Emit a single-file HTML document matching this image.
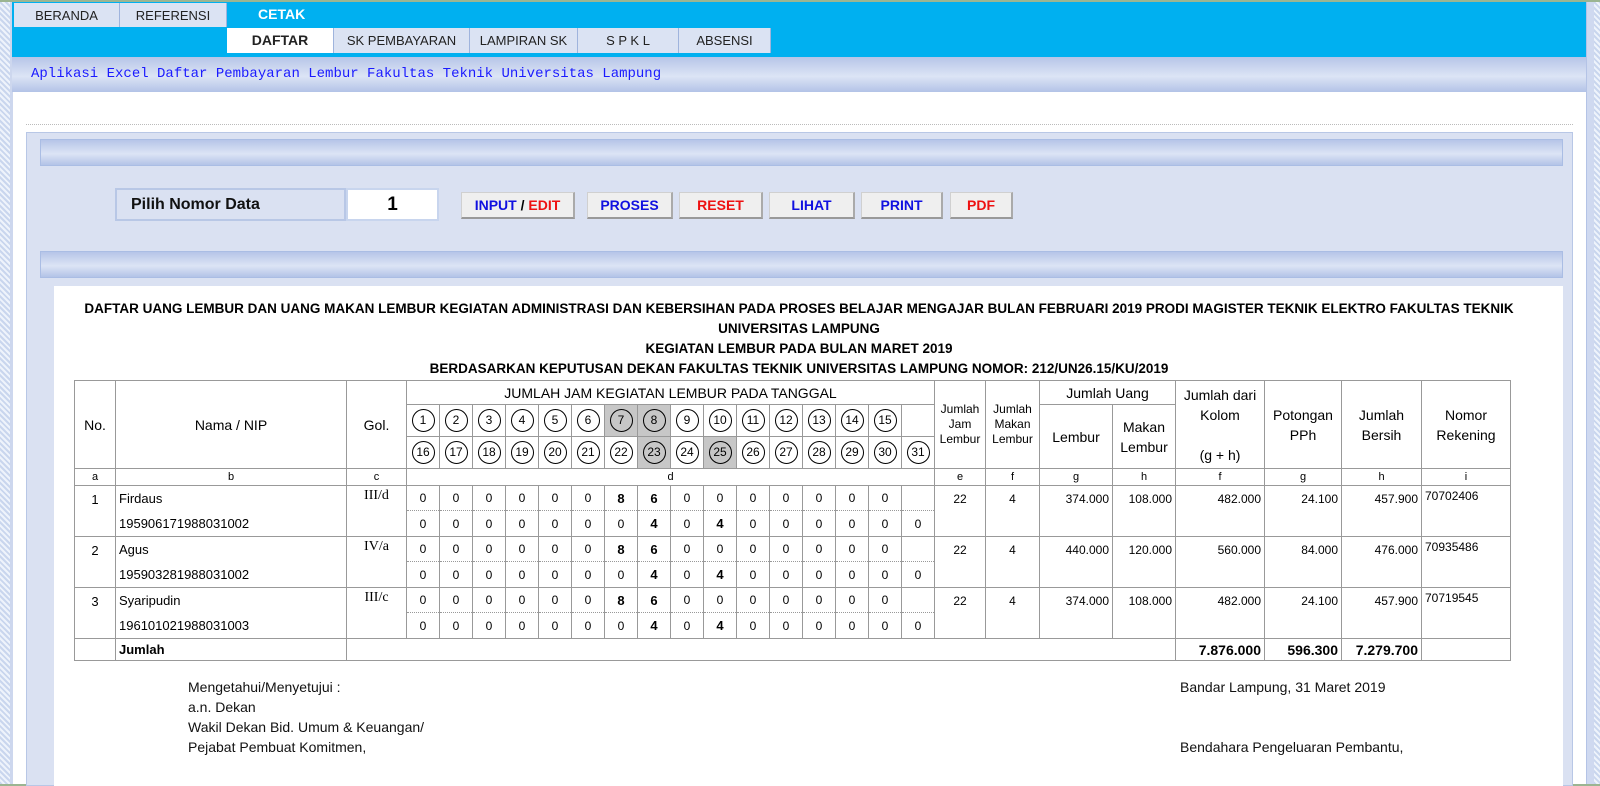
<!DOCTYPE html>
<html><head><meta charset="utf-8"><style>
*{box-sizing:border-box;margin:0;padding:0}
body{width:1600px;height:786px;overflow:hidden;background:#fff;position:relative;font-family:"Liberation Sans",sans-serif;}
.abs{position:absolute}
.hatch{background:repeating-linear-gradient(45deg,#c9d6ee 0 2px,#eef3fb 2px 4px)}
.tab{position:absolute;font-size:13px;color:#222;text-align:center;background:#dbe3f3;border-right:1px solid #9fb4dd;line-height:25px;font-family:"Liberation Sans Narrow","Liberation Sans",sans-serif}
.grad{background:linear-gradient(#b6c5e8,#dce4f5 55%,#b3c3e7);}
.btn{position:absolute;top:192px;height:27px;background:#efefef;border:1px solid #d0d0d0;border-bottom:2px solid #999;border-right:2px solid #aaa;font-size:14px;font-weight:bold;text-align:center;line-height:24px;font-family:"Liberation Sans Narrow","Liberation Sans",sans-serif}
.b{color:#1010e0}.r{color:#ee1111}
table{position:absolute;left:74px;top:380px;border-collapse:collapse;table-layout:fixed;font-family:"Liberation Sans Narrow","Liberation Sans",sans-serif;font-size:12px;color:#000}
td{border:1px solid #999;text-align:center;padding:0;overflow:hidden;white-space:nowrap}
.c{display:inline-block;width:23px;height:23px;border:1px solid #000;border-radius:50%;line-height:21px;font-size:12px}
.sh{background:repeating-conic-gradient(#aaa 0 25%,#e4e4e4 0 50%) 0 0/2px 2px}
.t{border-top:none}.bt{border-bottom:1px dotted #999}
.tp{vertical-align:top;padding-top:6px}
.rt{text-align:right;padding-right:3px}
.lf{text-align:left;padding-left:3px}
.bold{font-weight:bold;font-size:13px}
.sig{position:absolute;font-size:14px;color:#111;line-height:20px}
</style></head><body>
<div class="abs" style="left:0;top:0;width:1600px;height:2px;background:#9bb592"></div>
<div class="abs" style="left:0;top:784px;width:1600px;height:2px;background:#9bb592"></div>
<div class="abs hatch" style="left:0;top:2px;width:10px;height:782px"></div>
<div class="abs" style="left:10px;top:2px;width:3px;height:782px;background:#cdd7ee"></div>
<div class="abs" style="left:1586px;top:2px;width:8px;height:782px;background:#cfd9f0;border-left:1px solid #b4c3e6"></div>
<div class="abs hatch" style="left:1594px;top:2px;width:6px;height:782px"></div>
<div class="abs" style="left:12px;top:2px;width:1574px;height:55px;background:#00b0f0"></div>
<div class="tab" style="left:14px;top:3px;width:106px;height:24px">BERANDA</div>
<div class="tab" style="left:120px;top:3px;width:107px;height:24px">REFERENSI</div>
<div class="abs" style="left:258px;top:6px;color:#fff;font-weight:bold;font-size:14px;font-family:'Liberation Sans Narrow','Liberation Sans',sans-serif">CETAK</div>
<div class="tab" style="left:227px;top:28px;width:107px;height:25px;background:#fff;font-weight:bold;font-size:14px">DAFTAR</div>
<div class="tab" style="left:334px;top:28px;width:136px;height:25px">SK PEMBAYARAN</div>
<div class="tab" style="left:470px;top:28px;width:108px;height:25px">LAMPIRAN SK</div>
<div class="tab" style="left:578px;top:28px;width:101px;height:25px">S P K L</div>
<div class="tab" style="left:679px;top:28px;width:92px;height:25px">ABSENSI</div>
<div class="abs grad" style="left:12px;top:57px;width:1574px;height:35px"></div>
<div class="abs" style="left:31px;top:66px;font-family:'Liberation Mono',monospace;font-size:14px;color:#1a1aff">Aplikasi Excel Daftar Pembayaran Lembur Fakultas Teknik Universitas Lampung</div>
<div class="abs" style="left:26px;top:124px;width:1547px;border-top:1px dotted #bbb"></div>
<div class="abs" style="left:26px;top:132px;width:1547px;height:654px;background:#dae1f2;border:1px solid #b8c7e6"></div>
<div class="abs grad" style="left:40px;top:139px;width:1523px;height:27px;border:1px solid #aabde4"></div>
<div class="abs grad" style="left:40px;top:251px;width:1523px;height:27px;border:1px solid #aabde4"></div>
<div class="abs" style="left:115px;top:188px;width:231px;height:33px;border:2px solid #b8c7e6;background:#dae1f2;font-weight:bold;font-size:16px;line-height:29px;padding-left:14px;color:#111;font-family:'Liberation Sans Narrow','Liberation Sans',sans-serif">Pilih Nomor Data</div>
<div class="abs" style="left:346px;top:188px;width:93px;height:33px;background:#fff;border:2px solid #c8d5ee;text-align:center;font-weight:bold;font-size:19px;line-height:29px">1</div>
<div class="btn" style="left:461px;width:114px"><span class="b">INPUT</span> / <span class="r">EDIT</span></div>
<div class="btn b" style="left:587px;width:86px">PROSES</div>
<div class="btn r" style="left:679px;width:84px">RESET</div>
<div class="btn b" style="left:769px;width:86px">LIHAT</div>
<div class="btn b" style="left:861px;width:82px">PRINT</div>
<div class="btn r" style="left:950px;width:63px">PDF</div>
<div class="abs" style="left:54px;top:286px;width:1509px;height:500px;background:#fff"></div>
<div class="abs" style="left:54px;top:299px;width:1490px;text-align:center;font-weight:bold;font-size:13.5px;line-height:20px;color:#000;font-family:'Liberation Sans Narrow','Liberation Sans',sans-serif">DAFTAR UANG LEMBUR DAN UANG MAKAN LEMBUR KEGIATAN ADMINISTRASI DAN KEBERSIHAN PADA PROSES BELAJAR MENGAJAR BULAN FEBRUARI 2019 PRODI MAGISTER TEKNIK ELEKTRO FAKULTAS TEKNIK<br>UNIVERSITAS LAMPUNG<br>KEGIATAN LEMBUR PADA BULAN MARET 2019<br>BERDASARKAN KEPUTUSAN DEKAN FAKULTAS TEKNIK UNIVERSITAS LAMPUNG NOMOR: 212/UN26.15/KU/2019</div>
<table>
<colgroup><col style="width:41px"><col style="width:231px"><col style="width:60px">
<col style="width:33px"><col style="width:33px"><col style="width:33px"><col style="width:33px"><col style="width:33px"><col style="width:33px"><col style="width:33px"><col style="width:33px"><col style="width:33px"><col style="width:33px"><col style="width:33px"><col style="width:33px"><col style="width:33px"><col style="width:33px"><col style="width:33px"><col style="width:33px">
<col style="width:51px"><col style="width:54px"><col style="width:73px"><col style="width:63px"><col style="width:89px"><col style="width:77px"><col style="width:80px"><col style="width:89px"></colgroup>
<tr style="height:24px"><td rowspan="3" style="font-size:14px">No.</td><td rowspan="3" style="font-size:14px">Nama / NIP</td><td rowspan="3" style="font-size:14px">Gol.</td><td colspan="16" style="font-size:14px">JUMLAH JAM KEGIATAN LEMBUR PADA TANGGAL</td><td rowspan="3" style="white-space:normal;line-height:15px">Jumlah Jam Lembur</td><td rowspan="3" style="white-space:normal;line-height:15px">Jumlah Makan Lembur</td><td colspan="2" style="font-size:14px">Jumlah Uang</td><td rowspan="3" style="font-size:14px;line-height:20px">Jumlah dari<br>Kolom<br><br>(g + h)</td><td rowspan="3" style="font-size:14px;line-height:20px">Potongan<br>PPh</td><td rowspan="3" style="font-size:14px;line-height:20px">Jumlah<br>Bersih</td><td rowspan="3" style="font-size:14px;line-height:20px">Nomor<br>Rekening</td></tr>
<tr style="height:32px"><td><span class="c">1</span></td><td><span class="c">2</span></td><td><span class="c">3</span></td><td><span class="c">4</span></td><td><span class="c">5</span></td><td><span class="c">6</span></td><td class="sh"><span class="c">7</span></td><td class="sh"><span class="c">8</span></td><td><span class="c">9</span></td><td><span class="c">10</span></td><td><span class="c">11</span></td><td><span class="c">12</span></td><td><span class="c">13</span></td><td><span class="c">14</span></td><td><span class="c">15</span></td><td></td><td rowspan="2" style="font-size:14px">Lembur</td><td rowspan="2" style="font-size:14px;line-height:20px">Makan<br>Lembur</td></tr>
<tr style="height:32px"><td><span class="c">16</span></td><td><span class="c">17</span></td><td><span class="c">18</span></td><td><span class="c">19</span></td><td><span class="c">20</span></td><td><span class="c">21</span></td><td><span class="c">22</span></td><td class="sh"><span class="c">23</span></td><td><span class="c">24</span></td><td class="sh"><span class="c">25</span></td><td><span class="c">26</span></td><td><span class="c">27</span></td><td><span class="c">28</span></td><td><span class="c">29</span></td><td><span class="c">30</span></td><td><span class="c">31</span></td></tr>
<tr style="height:17px;font-size:11px"><td>a</td><td>b</td><td>c</td><td colspan="16">d</td><td>e</td><td>f</td><td>g</td><td>h</td><td>f</td><td>g</td><td>h</td><td>i</td></tr>
<tr style="height:25px"><td rowspan="2" class="tp" style="font-size:13px">1</td><td class="lf" style="border-bottom:none;font-size:13px">Firdaus</td><td rowspan="2" class="tp" style="font-family:'Liberation Serif',serif;font-size:14px;padding-top:2px">III/d</td>
<td class="bt">0</td><td class="bt">0</td><td class="bt">0</td><td class="bt">0</td><td class="bt">0</td><td class="bt">0</td><td class="bt bold">8</td><td class="bt bold">6</td><td class="bt">0</td><td class="bt">0</td><td class="bt">0</td><td class="bt">0</td><td class="bt">0</td><td class="bt">0</td><td class="bt">0</td><td class="bt"></td>
<td rowspan="2" class="tp">22</td><td rowspan="2" class="tp">4</td><td rowspan="2" class="tp rt">374.000</td><td rowspan="2" class="tp rt">108.000</td><td rowspan="2" class="tp rt">482.000</td><td rowspan="2" class="tp rt">24.100</td><td rowspan="2" class="tp rt">457.900</td><td rowspan="2" class="lf" style="vertical-align:top;padding-top:3px">70702406</td></tr>
<tr style="height:26px"><td class="lf t" style="font-size:13px">195906171988031002</td><td class="t">0</td><td class="t">0</td><td class="t">0</td><td class="t">0</td><td class="t">0</td><td class="t">0</td><td class="t">0</td><td class="t bold">4</td><td class="t">0</td><td class="t bold">4</td><td class="t">0</td><td class="t">0</td><td class="t">0</td><td class="t">0</td><td class="t">0</td><td class="t">0</td></tr>
<tr style="height:25px"><td rowspan="2" class="tp" style="font-size:13px">2</td><td class="lf" style="border-bottom:none;font-size:13px">Agus</td><td rowspan="2" class="tp" style="font-family:'Liberation Serif',serif;font-size:14px;padding-top:2px">IV/a</td>
<td class="bt">0</td><td class="bt">0</td><td class="bt">0</td><td class="bt">0</td><td class="bt">0</td><td class="bt">0</td><td class="bt bold">8</td><td class="bt bold">6</td><td class="bt">0</td><td class="bt">0</td><td class="bt">0</td><td class="bt">0</td><td class="bt">0</td><td class="bt">0</td><td class="bt">0</td><td class="bt"></td>
<td rowspan="2" class="tp">22</td><td rowspan="2" class="tp">4</td><td rowspan="2" class="tp rt">440.000</td><td rowspan="2" class="tp rt">120.000</td><td rowspan="2" class="tp rt">560.000</td><td rowspan="2" class="tp rt">84.000</td><td rowspan="2" class="tp rt">476.000</td><td rowspan="2" class="lf" style="vertical-align:top;padding-top:3px">70935486</td></tr>
<tr style="height:26px"><td class="lf t" style="font-size:13px">195903281988031002</td><td class="t">0</td><td class="t">0</td><td class="t">0</td><td class="t">0</td><td class="t">0</td><td class="t">0</td><td class="t">0</td><td class="t bold">4</td><td class="t">0</td><td class="t bold">4</td><td class="t">0</td><td class="t">0</td><td class="t">0</td><td class="t">0</td><td class="t">0</td><td class="t">0</td></tr>
<tr style="height:25px"><td rowspan="2" class="tp" style="font-size:13px">3</td><td class="lf" style="border-bottom:none;font-size:13px">Syaripudin</td><td rowspan="2" class="tp" style="font-family:'Liberation Serif',serif;font-size:14px;padding-top:2px">III/c</td>
<td class="bt">0</td><td class="bt">0</td><td class="bt">0</td><td class="bt">0</td><td class="bt">0</td><td class="bt">0</td><td class="bt bold">8</td><td class="bt bold">6</td><td class="bt">0</td><td class="bt">0</td><td class="bt">0</td><td class="bt">0</td><td class="bt">0</td><td class="bt">0</td><td class="bt">0</td><td class="bt"></td>
<td rowspan="2" class="tp">22</td><td rowspan="2" class="tp">4</td><td rowspan="2" class="tp rt">374.000</td><td rowspan="2" class="tp rt">108.000</td><td rowspan="2" class="tp rt">482.000</td><td rowspan="2" class="tp rt">24.100</td><td rowspan="2" class="tp rt">457.900</td><td rowspan="2" class="lf" style="vertical-align:top;padding-top:3px">70719545</td></tr>
<tr style="height:26px"><td class="lf t" style="font-size:13px">196101021988031003</td><td class="t">0</td><td class="t">0</td><td class="t">0</td><td class="t">0</td><td class="t">0</td><td class="t">0</td><td class="t">0</td><td class="t bold">4</td><td class="t">0</td><td class="t bold">4</td><td class="t">0</td><td class="t">0</td><td class="t">0</td><td class="t">0</td><td class="t">0</td><td class="t">0</td></tr>
<tr style="height:22px"><td></td><td class="lf bold">Jumlah</td><td colspan="21" style="border-left:none"></td><td class="rt bold" style="font-size:14px">7.876.000</td><td class="rt bold" style="font-size:14px">596.300</td><td class="rt bold" style="font-size:14px">7.279.700</td><td></td></tr>
</table>
<div class="sig" style="left:188px;top:677px">Mengetahui/Menyetujui :<br>a.n. Dekan<br>Wakil Dekan Bid. Umum &amp; Keuangan/<br>Pejabat Pembuat Komitmen,</div>
<div class="sig" style="left:1180px;top:677px">Bandar Lampung, 31 Maret 2019</div>
<div class="sig" style="left:1180px;top:737px">Bendahara Pengeluaran Pembantu,</div>
</body></html>
